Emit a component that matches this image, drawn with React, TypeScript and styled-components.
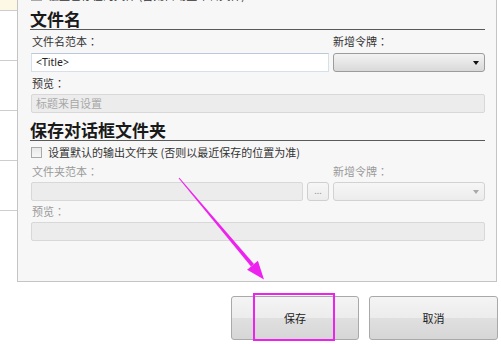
import React from "react";
import styled, { createGlobalStyle } from "styled-components";

const Global = createGlobalStyle`
  html, body { margin: 0; padding: 0; background: #ffffff; }
  body { font-family: "Noto Sans CJK SC", "Noto Sans", sans-serif; font-size: 11px; color: #333; }
`;

const Page = styled.div`
  position: relative;
  width: 501px;
  height: 344px;
  overflow: hidden;
  display: flex;
  background: #ffffff;
`;

const SideList = styled.div`
  width: 17px;
  flex-shrink: 0;
  display: flex;
  flex-direction: column;
`;

const SideItem = styled.div<{ $h: number; $tint?: boolean }>`
  height: ${(p) => p.$h}px;
  border-bottom: 1px solid #cdcdcd;
  background: ${(p) => (p.$tint ? "#fdf7e6" : "#ffffff")};
`;

const Main = styled.div`
  width: 484px;
  display: flex;
  flex-direction: column;
`;

const Panel = styled.div`
  box-sizing: border-box;
  width: 480px;
  margin-top: -13px;
  border: 1px solid #c4c4c4;
  background: #f7f7f7;
  padding: 0 11px 40px 13px;
  display: flex;
  flex-direction: column;
`;

const CheckRow = styled.div<{ $h: number; $mt: number }>`
  height: ${(p) => p.$h}px;
  margin-top: ${(p) => p.$mt}px;
  display: flex;
  align-items: center;
  gap: 6px;
  font-size: 11px;
  line-height: 16px;
  color: #333;
  white-space: nowrap;
`;

const Check = styled.span`
  box-sizing: border-box;
  width: 11px;
  height: 11px;
  border: 1px solid #a9a9a9;
  background: linear-gradient(#e9e9e9, #f6f6f6);
  flex-shrink: 0;
`;

const Heading = styled.div<{ $mt: number }>`
  margin-top: ${(p) => p.$mt}px;
  margin-left: -1px;
  height: 20px;
  line-height: 20px;
  font-size: 17px;
  font-weight: 700;
  color: #1a1a1a;
  border-bottom: 1px solid #5a5a5a;
`;

const LabelRow = styled.div<{ $mt: number; $muted?: boolean }>`
  margin-top: ${(p) => p.$mt}px;
  height: 17px;
  line-height: 17px;
  display: flex;
  font-size: 11px;
  color: ${(p) => (p.$muted ? "#9a9a9a" : "#333")};
  padding-left: 1px;
`;

const Colon = styled.span`
  font-family: "Noto Sans CJK TC", "Noto Sans CJK SC", sans-serif;
`;

const Grow = styled.span`
  flex: 1;
`;

const SideLabel = styled.span`
  width: 152px;
`;

const FieldRow = styled.div<{ $mt: number }>`
  margin-top: ${(p) => p.$mt}px;
  height: 19px;
  display: flex;
  gap: 4px;
`;

const TextInput = styled.div`
  box-sizing: border-box;
  flex: 1;
  height: 19px;
  background: #ffffff;
  border: 1px solid #d6e0ea;
  border-top-color: #b9c9d9;
  padding-left: 4px;
  font-family: "Noto Sans", "Noto Sans CJK SC", sans-serif;
  font-size: 10.5px;
  line-height: 17px;
  color: #222;
`;

const DisabledBox = styled.div<{ $grow?: boolean }>`
  box-sizing: border-box;
  ${(p) => (p.$grow ? "flex: 1;" : "")}
  height: 19px;
  background: #ececec;
  border: 1px solid #d8d8d8;
  border-radius: 2px;
  padding-left: 4px;
  font-size: 11px;
  line-height: 17px;
  color: #a8a8a8;
`;

const Select = styled.div<{ $disabled?: boolean }>`
  box-sizing: border-box;
  width: 152px;
  height: 19px;
  border-radius: 3px;
  border: 1px solid ${(p) => (p.$disabled ? "#d2d2d2" : "#9c9c9c")};
  background: ${(p) =>
    p.$disabled
      ? "linear-gradient(#f6f6f6, #ececec)"
      : "linear-gradient(#f3f3f3, #e6e6e6 50%, #d9d9d9)"};
  display: flex;
  align-items: center;
  justify-content: flex-end;
  padding-right: 5px;
`;

const Caret = styled.span<{ $disabled?: boolean }>`
  width: 0;
  height: 0;
  border-left: 3px solid transparent;
  border-right: 3px solid transparent;
  border-top: 4px solid ${(p) => (p.$disabled ? "#a8a8a8" : "#111")};
`;

const DotsButton = styled.div`
  box-sizing: border-box;
  width: 22px;
  height: 19px;
  border: 1px solid #cfcfcf;
  border-radius: 3px;
  background: linear-gradient(#f6f6f6, #ececec);
  color: #9a9a9a;
  font-size: 9px;
  line-height: 15px;
  text-align: center;
`;

const Actions = styled.div`
  margin-top: 14px;
  display: flex;
  justify-content: flex-end;
  gap: 10px;
  padding-right: 3px;
`;

const Button = styled.div<{ $w: number }>`
  position: relative;
  box-sizing: border-box;
  width: ${(p) => p.$w}px;
  height: 44px;
  border: 1px solid #a9a9a9;
  border-radius: 3px;
  background: linear-gradient(#f4f4f4 0%, #ececec 50%, #e0e0e0 50%, #d6d6d6 100%);
  display: flex;
  align-items: center;
  justify-content: center;
  font-size: 11px;
  color: #222;
`;

const Highlight = styled.span`
  position: absolute;
  left: 21px;
  top: -4px;
  width: 82px;
  height: 48px;
  box-sizing: border-box;
  border: 2px solid #ee22ee;
  pointer-events: none;
`;

const Overlay = styled.svg`
  position: absolute;
  left: 0;
  top: 0;
  pointer-events: none;
`;

export default function App() {
  return (
    <>
      <Global />
      <Page>
        <SideList>
          <SideItem $h={10} $tint />
          <SideItem $h={49} />
          <SideItem $h={49} />
          <SideItem $h={49} />
          <SideItem $h={49} />
        </SideList>
        <Main>
          <Panel>
            <CheckRow $h={14} $mt={0}>
              <Check />
              <span>覆盖已存在的文件 (否则自动重命名文件)</span>
            </CheckRow>
            <Heading $mt={7}>文件名</Heading>
            <LabelRow $mt={3}>
              <Grow>文件名范本<Colon>：</Colon></Grow>
              <SideLabel>新增令牌<Colon>：</Colon></SideLabel>
            </LabelRow>
            <FieldRow $mt={3}>
              <TextInput>&lt;Title&gt;</TextInput>
              <Select>
                <Caret />
              </Select>
            </FieldRow>
            <LabelRow $mt={3}>
              <Grow>预览<Colon>：</Colon></Grow>
            </LabelRow>
            <FieldRow $mt={2}>
              <DisabledBox $grow>标题来自设置</DisabledBox>
            </FieldRow>
            <Heading $mt={7}>保存对话框文件夹</Heading>
            <CheckRow $h={16} $mt={3}>
              <Check />
              <span>设置默认的输出文件夹 (否则以最近保存的位置为准)</span>
            </CheckRow>
            <LabelRow $mt={3} $muted>
              <Grow>文件夹范本<Colon>：</Colon></Grow>
              <SideLabel>新增令牌<Colon>：</Colon></SideLabel>
            </LabelRow>
            <FieldRow $mt={2}>
              <DisabledBox $grow />
              <DotsButton>...</DotsButton>
              <Select $disabled>
                <Caret $disabled />
              </Select>
            </FieldRow>
            <LabelRow $mt={2} $muted>
              <Grow>预览<Colon>：</Colon></Grow>
            </LabelRow>
            <FieldRow $mt={2}>
              <DisabledBox $grow />
            </FieldRow>
          </Panel>
          <Actions>
            <Button $w={128}>
              保存
              <Highlight />
            </Button>
            <Button $w={129}>取消</Button>
          </Actions>
        </Main>
        <Overlay width={501} height={344} viewBox="0 0 501 344">
          <polygon
            points="178.6,178.3 179.4,177.7 254.0,263.9 251.0,266.5"
            fill="#ee22ee"
          />
          <polygon
            points="264,279.5 247.1,269.7 257.9,260.7"
            fill="#ee22ee"
          />
        </Overlay>
      </Page>
    </>
  );
}
